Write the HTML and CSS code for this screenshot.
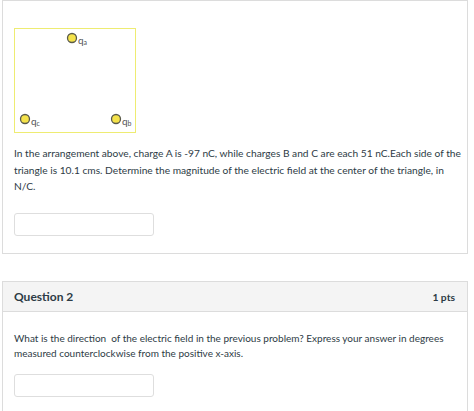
FILE: index.html
```html
<!DOCTYPE html>
<html>
<head>
<meta charset="utf-8">
<link rel="stylesheet" href="styles.css">
</head>
<body>
<div class="card card-first">
  <div class="body">
    <div class="diagram">
      <svg width="122" height="105" viewBox="0 0 122 105">
        <g class="charge">
          <circle cx="58" cy="10" r="4.5"/>
          <circle cx="11" cy="91" r="4.5"/>
          <circle cx="102" cy="91" r="4.5"/>
        </g>
        <text x="64" y="16" class="lbl">q<tspan class="sub" dy="1">a</tspan></text>
        <text x="17" y="97" class="lbl">q<tspan class="sub" dy="1">c</tspan></text>
        <text x="108" y="97" class="lbl">q<tspan class="sub" dy="1">b</tspan></text>
      </svg>
    </div>
    <p class="qtext">In the arrangement above, charge A is -97 nC, while charges B and C are each 51 nC.Each side of the triangle is 10.1 cms. Determine the magnitude of the electric field at the center of the triangle, in N/C.</p>
    <div class="answer"></div>
  </div>
</div>

<div class="card card-second">
  <div class="header">
    <span class="title">Question 2</span>
    <span class="pts">1 pts</span>
  </div>
  <div class="body body2">
    <p class="qtext qtext2">What is the direction &nbsp;of the electric field in the previous problem? Express your answer in degrees measured counterclockwise from the positive x-axis.</p>
    <div class="answer answer2"></div>
  </div>
</div>
</body>
</html>
```

FILE: styles.css
```css
html, body {
  margin: 0;
  padding: 0;
  background: #ffffff;
  font-family: Lato, "Open Sans", sans-serif;
  color: #2d3b45;
}

.card {
  margin-left: 2px;
  width: 466px;
  box-sizing: border-box;
  border: 1px solid #dcdcdc;
  background: #fff;
}

.card-first {
  height: 254px;
}

.card-second {
  margin-top: 27px;
  height: 140px;
  border-bottom: none;
}

.body {
  padding: 27px 3px 0 11px;
}

.diagram {
  width: 122px;
  height: 105px;
  box-sizing: border-box;
  border: 1.5px solid #eeec72;
}

.diagram svg {
  display: block;
  margin: -1.5px;
}

.charge circle {
  fill: #f4e24a;
  stroke: #5a5a4a;
  stroke-width: 1.3;
}

.lbl {
  font-family: Lato, sans-serif;
  font-size: 10px;
  fill: #555;
}

.sub {
  font-size: 7px;
}

.qtext {
  margin: 12px 0 0 0;
  font-size: 10.2px;
  line-height: 16.5px;
}

.answer {
  margin-top: 18px;
  width: 140px;
  height: 23px;
  box-sizing: border-box;
  border: 1px solid #dedede;
  border-radius: 3px;
  background: #fff;
}

.header {
  display: flex;
  justify-content: space-between;
  align-items: center;
  height: 29px;
  padding: 0 12px 0 11px;
  background: #f4f4f4;
  border-bottom: 1px solid #dcdcdc;
}

.title {
  font-size: 12px;
  font-weight: 700;
  color: #2d3b45;
}

.pts {
  font-size: 10.3px;
  font-weight: 700;
  color: #2d3b45;
}

.body2 {
  padding-top: 19px;
  padding-right: 12px;
}

.qtext2 {
  margin-top: 0;
  font-size: 10px;
  line-height: 15px;
}

.answer2 {
  margin-top: 13px;
}
```
